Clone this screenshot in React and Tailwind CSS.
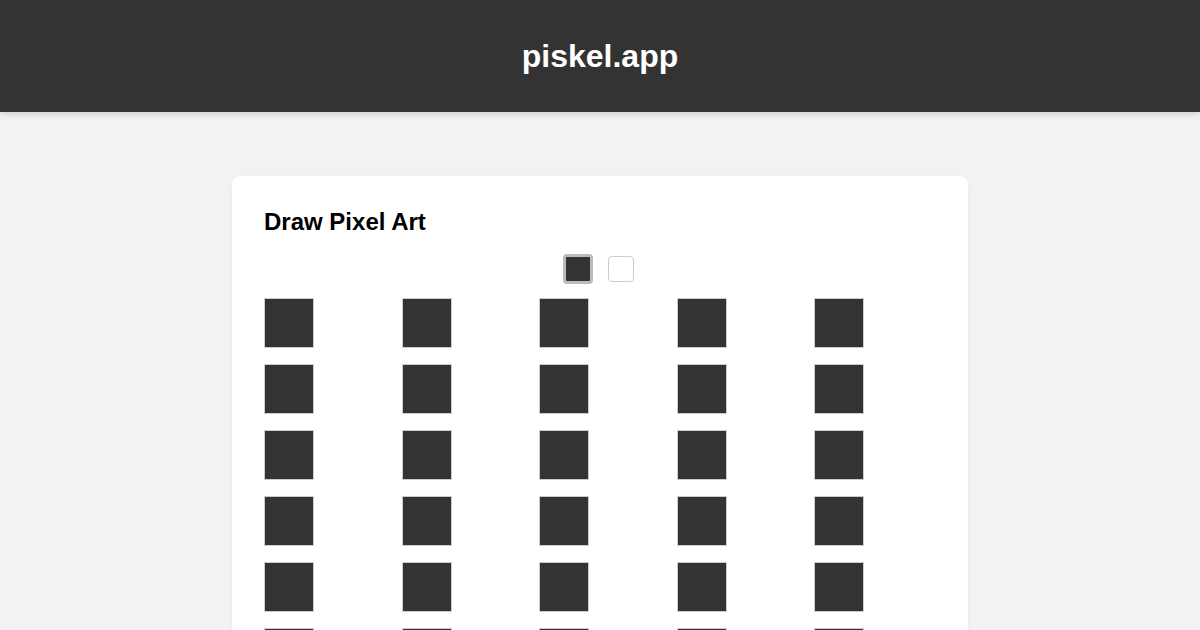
import React, { useState } from "react";

const COLORS = ["#333333", "#ffffff"];
const ROWS = 8;
const COLS = 5;

const App = () => {
  const [color, setColor] = useState(COLORS[0]);
  const [cells, setCells] = useState(Array(ROWS * COLS).fill("#333333"));

  const paint = (i) => {
    const next = [...cells];
    next[i] = color;
    setCells(next);
  };

  return (
    <div
      className="min-h-screen bg-[#f2f2f2]"
      style={{ fontFamily: '"Liberation Sans", Arial, sans-serif' }}
    >
      <header className="h-[112px] bg-[#333] flex items-center justify-center shadow-[0_2px_6px_rgba(0,0,0,0.15)]">
        <h1 className="text-[32px] font-bold text-white leading-none">
          piskel.app
        </h1>
      </header>

      <main className="flex justify-center pt-16 pb-16">
        <div className="w-[736px] bg-white rounded-lg p-8 shadow-[0_1px_4px_rgba(0,0,0,0.04)]">
          <h2 className="text-2xl font-bold text-black leading-[28px] mb-[18px]">
            Draw Pixel Art
          </h2>
          <div className="flex justify-center items-center gap-[15px] h-[30px] mb-[14px] pr-[3px]">
            {COLORS.map((c) => (
              <button
                key={c}
                onClick={() => setColor(c)}
                className={
                  color === c
                    ? "w-[30px] h-[30px] rounded border-[3px] border-[#bbb] cursor-pointer"
                    : "w-[26px] h-[26px] rounded border border-[#ccc] cursor-pointer"
                }
                style={{ backgroundColor: c }}
              />
            ))}
          </div>
          <div className="grid grid-cols-5 gap-4">
            {cells.map((c, i) => (
              <div
                key={i}
                onClick={() => paint(i)}
                className="w-[50px] h-[50px] border border-[#ccc] cursor-pointer"
                style={{ backgroundColor: c }}
              />
            ))}
          </div>
        </div>
      </main>
    </div>
  );
};

export default App;
